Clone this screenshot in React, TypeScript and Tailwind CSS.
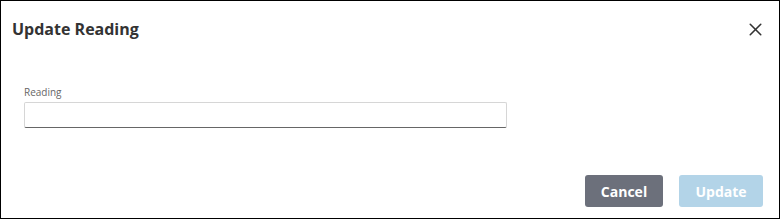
import { X } from 'lucide-react';

export default function App() {
  return (
    <div className="flex h-[219px] w-[780px] flex-col border border-black bg-white font-['Open_Sans',sans-serif]">
      <div className="flex items-center justify-between pl-[11px] pr-[13px] pt-[14px]">
        <h2 className="text-[16px] font-bold leading-[28px] text-[#333]">Update Reading</h2>
        <button className="text-[#333]">
          <X size={21} strokeWidth={1.8} />
        </button>
      </div>

      <div className="mt-[42px] px-[23px]">
        <label className="block text-[10px] leading-[14px] text-[#666]">Reading</label>
        <input
          type="text"
          className="mt-[3px] h-[26px] w-[483px] rounded-[2px] border border-[#d6d6d6] border-b-[#666] bg-white px-2 text-[13px] outline-none"
        />
      </div>

      <div className="mt-auto flex justify-end gap-[16px] pb-[11px] pr-[16px]">
        <button className="h-[32px] w-[78px] rounded-[3px] bg-[#6c707b] text-[14px] font-bold text-white">Cancel</button>
        <button className="h-[32px] w-[84px] rounded-[3px] bg-[#b3d4e8] text-[14px] font-bold text-white">Update</button>
      </div>
    </div>
  );
}
